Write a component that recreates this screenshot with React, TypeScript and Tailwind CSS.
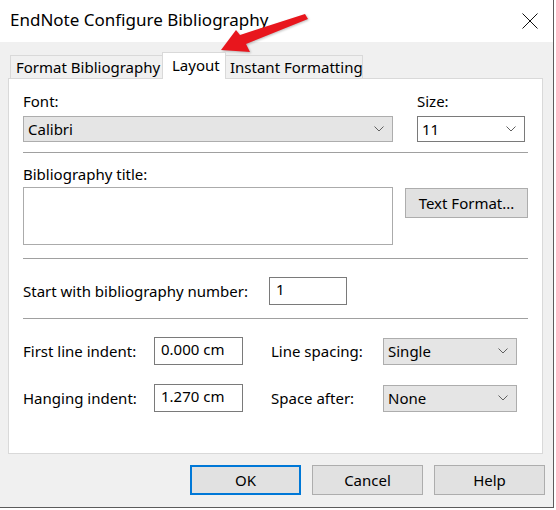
import React from 'react'

function Chevron() {
  return (
    <svg width="10" height="6" viewBox="0 0 10 6" className="shrink-0">
      <polyline points="0.5,0.5 5,5 9.5,0.5" fill="none" stroke="#606060" strokeWidth="1" />
    </svg>
  )
}

function Select({ value, width, light }: { value: string; width: string; light?: boolean }) {
  return (
    <div
      className={`${width} flex items-center justify-between pl-[4px] pr-[8px] border ${
        light ? 'bg-white border-[#7a7a7a]' : 'bg-[#e5e5e5] border-[#adadad]'
      }`}
    >
      <span className="leading-none">{value}</span>
      <Chevron />
    </div>
  )
}

function Button({ label, primary }: { label: string; primary?: boolean }) {
  return (
    <div
      className={`w-[111px] h-[30px] flex items-center justify-center bg-[#e1e1e1] ${
        primary ? 'border-2 border-[#0078d7]' : 'border border-[#adadad]'
      }`}
    >
      {label}
    </div>
  )
}

function Separator({ className }: { className: string }) {
  return <div className={`w-[505px] h-px bg-[#a0a0a0] ${className}`} />
}

function TextBox({ value, width }: { value: string; width: string }) {
  return (
    <div className={`${width} h-[28px] flex items-center pl-[6px] pb-[3px] bg-white border border-[#7a7a7a]`}>
      {value}
    </div>
  )
}

export default function App() {
  return (
    <div className="relative w-[556px] h-[510px] bg-white text-[15px] text-black font-['Noto_Sans',sans-serif]">
      <div className="w-[554px] h-[508px] flex flex-col bg-[#f0f0f0] border-r border-b border-[#5c5c5c]">
        {/* title bar */}
        <div className="h-[42px] flex items-center justify-between pl-[10px] pr-[15px] bg-white">
          <span className="text-[17px] pb-[2px]">EndNote Configure Bibliography</span>
          <svg width="16" height="16" viewBox="0 0 16 16">
            <path d="M0.5 0.5 L15.5 15.5 M15.5 0.5 L0.5 15.5" stroke="#111" strokeWidth="1" />
          </svg>
        </div>

        {/* tabs */}
        <div className="relative z-10 h-[36px] flex items-end pl-[10px] whitespace-nowrap">
          <div className="w-[152px] h-[23px] pl-[5px] pt-[1px] border-t border-l border-[#d9d9d9] bg-[#f0f0f0] leading-[20px]">
            Format Bibliography
          </div>
          <div className="w-[64px] h-[27px] -mb-px pl-[9px] pt-[1px] border border-b-0 border-[#d9d9d9] bg-white leading-[22px]">
            Layout
          </div>
          <div className="w-[137px] h-[23px] pl-[4px] pt-[1px] border-t border-r border-[#d9d9d9] bg-[#f0f0f0] leading-[20px]">
            Instant Formatting
          </div>
        </div>

        {/* panel */}
        <div className="ml-[8px] w-[535px] h-[376px] flex flex-col pl-[14px] pt-[12px] bg-white border border-[#d9d9d9]">
          <div className="flex h-[20px] leading-[20px]">
            <span className="w-[394px]">Font:</span>
            <span>Size:</span>
          </div>
          <div className="flex mt-[5px] h-[26px]">
            <Select value="Calibri" width="w-[370px]" />
            <div className="w-[24px]" />
            <Select value="11" width="w-[108px]" light />
          </div>
          <Separator className="mt-[10px]" />

          <div className="mt-[11px] h-[20px] leading-[20px]">Bibliography title:</div>
          <div className="flex mt-[3px] gap-[12px]">
            <div className="w-[370px] h-[58px] bg-white border border-[#ababab]" />
            <div className="mt-[1px] w-[123px] h-[30px] flex items-center justify-center bg-[#e1e1e1] border border-[#adadad]">
              Text Format...
            </div>
          </div>
          <Separator className="mt-[13px]" />

          <div className="flex items-center mt-[18px] h-[28px]">
            <span className="w-[246px]">Start with bibliography number:</span>
            <TextBox value="1" width="w-[78px]" />
          </div>
          <Separator className="mt-[13px]" />

          <div className="flex items-center mt-[18px] h-[28px]">
            <span className="w-[131px]">First line indent:</span>
            <TextBox value="0.000 cm" width="w-[89px]" />
            <span className="ml-[28px] w-[112px]">Line spacing:</span>
            <div className="flex h-[27px]">
              <Select value="Single" width="w-[134px]" />
            </div>
          </div>
          <div className="flex items-center mt-[19px] h-[28px]">
            <span className="w-[131px]">Hanging indent:</span>
            <TextBox value="1.270 cm" width="w-[89px]" />
            <span className="ml-[28px] w-[112px]">Space after:</span>
            <div className="flex h-[27px]">
              <Select value="None" width="w-[134px]" />
            </div>
          </div>
        </div>

        {/* buttons */}
        <div className="flex gap-[11px] pl-[190px] mt-[11px]">
          <Button label="OK" primary />
          <Button label="Cancel" />
          <Button label="Help" />
        </div>
      </div>

      {/* annotation arrow */}
      <svg className="absolute left-0 top-0 pointer-events-none" width="556" height="80" viewBox="0 0 556 80">
        <polygon
          points="221,50 236,30 240,35 305,14 308,19 246,44 250,52"
          fill="#e8161d"
          style={{ filter: 'drop-shadow(1px 1px 1px rgba(0,0,0,0.25))' }}
        />
      </svg>
    </div>
  )
}
